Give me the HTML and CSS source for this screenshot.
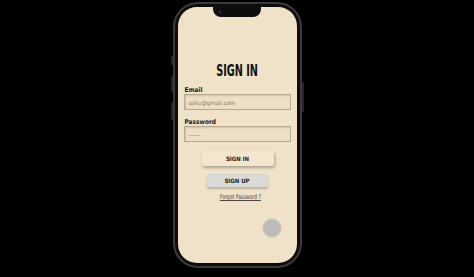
FILE: index.html
```html
<!DOCTYPE html>
<html>
<head>
<meta charset="utf-8">
<link rel="stylesheet" href="styles.css">
</head>
<body>
<div class="stage">
  <div class="phone">
    <span class="side-btn side-l1"></span>
    <span class="side-btn side-l2"></span>
    <span class="side-btn side-l3"></span>
    <span class="side-btn side-r1"></span>
    <div class="screen">
      <div class="notch"><span class="camera"></span></div>
      <h1 class="title"><span>SIGN IN</span></h1>
      <form class="form">
        <label class="label">Email</label>
        <div class="input"><span class="placeholder">ashu@gmail.com</span></div>
        <label class="label label-gap">Password</label>
        <div class="input"><span class="placeholder">------</span></div>
        <div class="actions">
          <div class="btn btn-in">SIGN IN</div>
          <div class="btn btn-up">SIGN UP</div>
          <a class="forgot"><span>Forgot Password ?</span></a>
        </div>
      </form>
      <div class="fab"></div>
    </div>
  </div>
</div>
</body>
</html>
```
FILE: styles.css
```css
html, body {
  margin: 0;
  padding: 0;
  background: #000;
  width: 474px;
  height: 277px;
  overflow: hidden;
  font-family: "DejaVu Sans Condensed", "DejaVu Sans", sans-serif;
}
.stage {
  display: flex;
  justify-content: center;
  padding-top: 2px;
}
.phone {
  position: relative;
  width: 129px;
  height: 266px;
  box-sizing: border-box;
  border: 2px solid #3a3a3a;
  border-radius: 25px;
  background: #0d0d0d;
  padding: 3px;
}
.side-btn {
  position: absolute;
  width: 2px;
  background: #262626;
  border-radius: 1px;
}
.side-l1 { left: -4px; top: 52px; height: 9px; }
.side-l2 { left: -4px; top: 72px; height: 16px; }
.side-l3 { left: -4px; top: 98px; height: 18px; }
.side-r1 { right: -4px; top: 78px; height: 30px; }
.screen {
  position: relative;
  height: 100%;
  border-radius: 19px;
  background: #efe2c9;
  overflow: hidden;
  display: flex;
  flex-direction: column;
  padding: 0 6px;
}
.notch {
  position: absolute;
  top: 0;
  left: 35px;
  width: 48px;
  height: 10px;
  background: #0d0d0d;
  border-radius: 0 0 8px 8px;
}
.camera {
  position: absolute;
  left: 5px;
  top: 3px;
  width: 4px;
  height: 4px;
  border-radius: 50%;
  background: #1e1e2a;
}
.title {
  margin: 56px 0 0;
  text-align: center;
  font-size: 15px;
  line-height: 16px;
  font-weight: bold;
  color: #111;
}
.title span {
  display: inline-block;
  transform: scaleX(0.72);
}
.form {
  display: flex;
  flex-direction: column;
  margin: 8px 0 0;
}
.label {
  font-size: 6.5px;
  line-height: 7px;
  font-weight: bold;
  color: #1a1a1a;
  padding-left: 1px;
}
.label-gap {
  margin-top: 9px;
}
.input {
  height: 16px;
  box-sizing: border-box;
  border: 1px solid #b7a98f;
  background: #ecdfc5;
  box-shadow: inset 1px 1px 2px rgba(0,0,0,0.12);
  display: flex;
  align-items: center;
  padding-left: 4px;
}
.placeholder {
  font-size: 6px;
  color: #857b6c;
}
.actions {
  display: flex;
  flex-direction: column;
  align-items: center;
}
.btn {
  display: flex;
  align-items: center;
  justify-content: center;
  font-size: 6px;
  font-weight: bold;
  color: #1a1a1a;
  border-radius: 2px;
}
.btn-in {
  margin-top: 9px;
  width: 72px;
  height: 15px;
  background: #f2e6cf;
  box-shadow: 1px 2px 3px rgba(0,0,0,0.28);
  margin-left: 1px;
}
.btn-up {
  margin-top: 8px;
  width: 61px;
  height: 13px;
  background: #dadad6;
  box-shadow: 0 2px 2px rgba(0,0,0,0.22);
}
.forgot {
  margin-top: 6px;
  font-size: 6.5px;
  line-height: 8px;
  color: #4e473e;
  text-decoration: underline;
  margin-left: 6px;
}
.forgot span {
  display: inline-block;
  transform: scaleX(0.78);
  text-decoration: underline;
}
.fab {
  position: absolute;
  left: 85px;
  top: 212px;
  width: 18px;
  height: 18px;
  border-radius: 50%;
  background: #bdbcbb;
  box-shadow: 0 0 2px rgba(0,0,0,0.15);
}
```
